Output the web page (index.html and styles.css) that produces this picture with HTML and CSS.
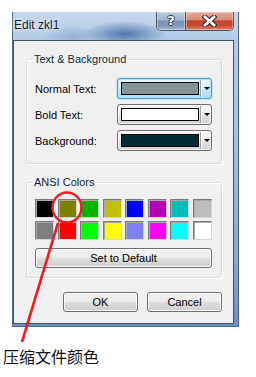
FILE: index.html
```html
<!DOCTYPE html>
<html>
<head>
<meta charset="utf-8">
<link rel="stylesheet" href="styles.css">
</head>
<body>
<div class="window">
  <div class="titlebar">
    <span class="title">Edit zkl1</span>
    <div class="caption-buttons">
      <div class="cap help"><span class="qmark">?</span></div>
      <div class="cap close">
        <svg width="15" height="12" viewBox="0 0 15 12">
          <path d="M3 2 L12 10 M12 2 L3 10" stroke="#3a2a2a" stroke-width="5" stroke-linecap="square" fill="none"/>
          <path d="M3 2 L12 10 M12 2 L3 10" stroke="#ffffff" stroke-width="2.8" stroke-linecap="square" fill="none"/>
        </svg>
      </div>
    </div>
  </div>
  <div class="client">
    <fieldset class="group group-text">
      <legend>Text &amp; Background</legend>
      <div class="rows">
        <div class="row">
          <span class="label">Normal Text:</span>
          <div class="combo focused"><span class="swatch sw-normal"></span><span class="sep"></span><span class="drop"><span class="arrow"></span></span></div>
        </div>
        <div class="row">
          <span class="label">Bold Text:</span>
          <div class="combo"><span class="swatch sw-bold"></span><span class="sep"></span><span class="drop"><span class="arrow"></span></span></div>
        </div>
        <div class="row">
          <span class="label">Background:</span>
          <div class="combo"><span class="swatch sw-bg"></span><span class="sep"></span><span class="drop"><span class="arrow"></span></span></div>
        </div>
      </div>
    </fieldset>
    <fieldset class="group group-ansi">
      <legend>ANSI Colors</legend>
      <div class="palette">
        <span class="cell c0"></span><span class="cell c1"></span><span class="cell c2"></span><span class="cell c3"></span>
        <span class="cell c4"></span><span class="cell c5"></span><span class="cell c6"></span><span class="cell c7"></span>
        <span class="cell c8"></span><span class="cell c9"></span><span class="cell c10"></span><span class="cell c11"></span>
        <span class="cell c12"></span><span class="cell c13"></span><span class="cell c14"></span><span class="cell c15"></span>
      </div>
      <button class="btn wide">Set to Default</button>
    </fieldset>
    <div class="actions">
      <button class="btn">OK</button>
      <button class="btn">Cancel</button>
    </div>
  </div>
</div>
<div class="note">压缩文件颜色</div>
<svg class="annotation" width="256" height="377" viewBox="0 0 256 377">
  <ellipse cx="67" cy="207.5" rx="14.5" ry="15" fill="none" stroke="#ee1c24" stroke-width="2.4"/>
  <path d="M58 223 L22 342" stroke="#ee1c24" stroke-width="2.6" fill="none"/>
</svg>
</body>
</html>
```
FILE: styles.css
```css
html, body {
  margin: 0;
  padding: 0;
}
body {
  position: relative;
  width: 256px;
  height: 377px;
  background: #ffffff;
  overflow: hidden;
  font-family: "Liberation Sans", Arial, sans-serif;
  font-size: 11px;
  color: #000;
}
.window {
  margin: 12px 0 0 12px;
  width: 227px;
  height: 315px;
  box-sizing: border-box;
  border: 1px solid #4d6b96;
  border-top: 0;
  background:
    radial-gradient(ellipse 42px 13px at 112px 22px, rgba(62,104,160,0.85), rgba(62,104,160,0)),
    radial-gradient(ellipse 30px 10px at 60px 24px, rgba(90,130,180,0.35), rgba(90,130,180,0)),
    linear-gradient(180deg, #c5d8ee 0px, #b3cae6 28px, #a3bedf 140px, #86a7d1 250px, #6a8fc0 315px);
  display: flex;
  flex-direction: column;
}
.titlebar {
  height: 28px;
  display: flex;
  align-items: flex-start;
  padding-right: 4px;
}
.title {
  font-size: 12px;
  line-height: 26px;
  padding-left: 1px;
  color: #15202e;
  text-shadow: 0 0 6px rgba(255,255,255,0.9), 0 0 3px rgba(255,255,255,0.7);
}
.caption-buttons {
  margin-left: auto;
  display: flex;
  height: 19px;
  border: 1px solid #4a5566;
  border-top: 0;
  border-radius: 0 0 5px 5px;
  overflow: hidden;
  box-sizing: border-box;
}
.cap {
  display: flex;
  align-items: center;
  justify-content: center;
  box-shadow: inset 0 0 0 1px rgba(255,255,255,0.35);
}
.help {
  width: 28px;
  background: linear-gradient(180deg, #bccadb 0%, #a3b5cb 45%, #7c94b4 50%, #7f98b9 75%, #9fb7d3 100%);
  border-right: 1px solid #4a5566;
}
.qmark {
  font-family: "DejaVu Sans", sans-serif;
  font-weight: bold;
  font-size: 13px;
  line-height: 13px;
  color: #fff;
  margin-top: -1px;
  text-shadow: -1px 0 #2c3a4e, 1px 0 #2c3a4e, 0 -1px #2c3a4e, 0 1px #2c3a4e;
}
.close {
  width: 47px;
  background: linear-gradient(180deg, #e9aa9c 0%, #dc8a78 42%, #c6432c 50%, #c84a33 75%, #e08569 100%);
}
.close svg {
  display: block;
  margin-top: -1px;
}
.client {
  margin: 0 4px 2px 0;
  flex: 1;
  background: #f0f0f0;
  border: 1px solid #3f5470;
  padding: 11px 11px 11px 12px;
  display: flex;
  flex-direction: column;
}
.group {
  margin: 0;
  border: 1px solid #d5dfe5;
  border-radius: 3px;
  box-shadow: inset 1px 1px 0 #ffffff, 1px 1px 0 #ffffff;
  min-width: 0;
}
.group legend {
  padding: 0 2px;
  margin-left: -3px;
  line-height: 14px;
  font-size: 11px;
  color: #0f1f3a;
}
.group-text {
  padding: 12px 9px 12px 8px;
}
.group-ansi {
  margin-top: 11px;
  padding: 10px 9px 9px 8px;
}
.rows {
  display: flex;
  flex-direction: column;
  gap: 5px;
}
.row {
  display: flex;
  align-items: center;
  justify-content: space-between;
  height: 21px;
}
.label {
  color: #000;
}
.combo {
  width: 95px;
  height: 21px;
  box-sizing: border-box;
  border: 1px solid #707070;
  border-radius: 3px;
  background: linear-gradient(180deg, #f4f4f4 0%, #ececec 50%, #e0e0e0 51%, #d3d3d3 100%);
  box-shadow: inset 0 0 0 1px rgba(255,255,255,0.75);
  display: flex;
  align-items: stretch;
}
.combo.focused {
  border-color: #3c9ee6;
  background: linear-gradient(180deg, #eaf6fd 0%, #d9f0fc 50%, #bee6fd 51%, #a9dbf6 100%);
  box-shadow: inset 0 0 0 1px #b8e2fa, 0 0 2px #86c8f3;
}
.swatch {
  width: 78px;
  margin: 3px 1px 3px 3px;
  box-sizing: border-box;
  border: 1px solid #000;
}
.sw-normal { background: #839496; }
.sw-bold { background: #ffffff; }
.sw-bg { background: #002b36; }
.sep {
  width: 1px;
  margin: 1px 0;
  background: #9c9c9c;
  box-shadow: 1px 0 0 rgba(255,255,255,0.8);
}
.drop {
  flex: 1;
  display: flex;
  align-items: center;
  justify-content: center;
}
.arrow {
  width: 0;
  height: 0;
  border-left: 3px solid transparent;
  border-right: 3px solid transparent;
  border-top: 3px solid #000;
  margin-left: 1px;
}
.palette {
  display: grid;
  grid-template-columns: repeat(8, 1fr);
  grid-auto-rows: 19px;
  column-gap: 3.6px;
  row-gap: 3px;
}
.cell {
  box-sizing: border-box;
  border: 1px solid;
  border-color: #7a7a7a #d6d6d6 #d6d6d6 #7a7a7a;
  box-shadow: inset 1px 1px 0 #a8a8a8;
}
.c0 { background: #000000; }
.c1 { background: #808000; }
.c2 { background: #00b400; }
.c3 { background: #c0c000; }
.c4 { background: #0000ff; }
.c5 { background: #b400b4; }
.c6 { background: #00bcbc; }
.c7 { background: #bcbcbc; }
.c8 { background: #7f7f7f; }
.c9 { background: #ff0000; }
.c10 { background: #00ff00; }
.c11 { background: #ffff00; }
.c12 { background: #8080ff; }
.c13 { background: #ff00ff; }
.c14 { background: #00ffff; }
.c15 { background: #ffffff; }
.btn {
  font-family: "Liberation Sans", Arial, sans-serif;
  font-size: 11px;
  color: #000;
  height: 20px;
  width: 75px;
  padding: 0;
  box-sizing: border-box;
  border: 1px solid #707070;
  border-radius: 3px;
  background: linear-gradient(180deg, #f2f2f2 0%, #ebebeb 50%, #dddddd 51%, #cfcfcf 100%);
  box-shadow: inset 0 0 0 1px rgba(255,255,255,0.8);
}
.btn.wide {
  display: block;
  width: 100%;
  margin-top: 8px;
}
.actions {
  margin-top: 14px;
  display: flex;
  justify-content: flex-end;
  gap: 9px;
}
.note {
  margin: 21px 0 0 3px;
  font-family: "Noto Sans CJK SC", sans-serif;
  font-size: 16px;
  line-height: 16px;
  color: #111;
}
.annotation {
  position: absolute;
  left: 0;
  top: 0;
  pointer-events: none;
}
```
